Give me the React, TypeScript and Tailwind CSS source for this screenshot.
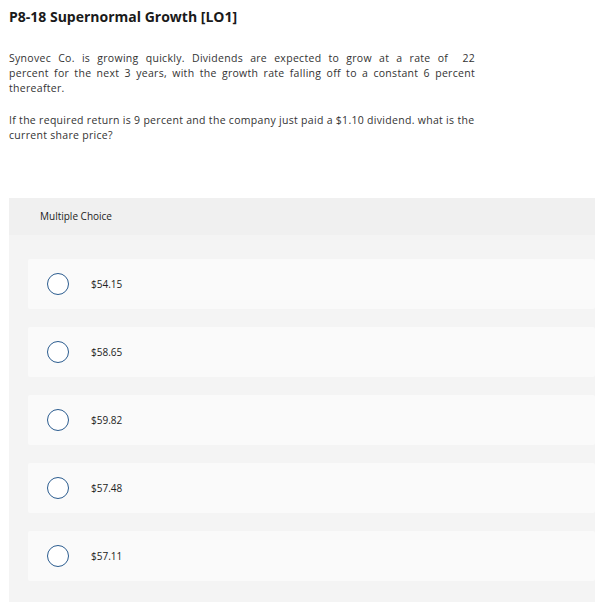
import React from 'react';

const choices = ['$54.15', '$58.65', '$59.82', '$57.48', '$57.11'];

const App: React.FC = () => {
  return (
    <div className="min-h-[602px] bg-white text-[#222] overflow-hidden" style={{ fontFamily: '"Open Sans", "Noto Sans", sans-serif' }}>
      <div className="px-[9px] pt-[8px]">
        <h1 className="text-[14px] font-bold leading-[18px] text-[#1a1a1a]">P8-18 Supernormal Growth [LO1]</h1>

        <div className="mt-[25px] w-[466px] text-[10.5px] leading-[15px] tracking-[0.3px] text-[#333]">
          <p className="text-justify">
            <span className="block [text-align-last:justify]">
              Synovec Co. is growing quickly. Dividends are expected to grow at a rate of&nbsp; 22
            </span>
            percent for the next 3 years, with the growth rate falling off to a constant 6 percent thereafter.
          </p>
          <p className="mt-[17px]">
            If the required return is 9 percent and the company just paid a $1.10 dividend. what is the current share price?
          </p>
        </div>
      </div>

      {/* Question panel */}
      <div className="ml-[9px] mt-[55px] bg-[#f4f4f4] pb-[21px]">
        <div className="h-[37px] bg-[#f0f0f0] flex items-center pl-[31px] text-[10px] text-[#222]">
          Multiple Choice
        </div>
        <div className="pt-[24px] pl-[19px] flex flex-col gap-[18px]">
          {choices.map((c) => (
            <div key={c} className="h-[50px] bg-[#fafafa] rounded-[2px] flex items-center pl-[19px]">
              <span className="w-[22px] h-[22px] rounded-full border-[1.5px] border-[#2b5c8f] bg-white shrink-0" />
              <span className="ml-[22px] text-[10px] text-[#222]">{c}</span>
            </div>
          ))}
        </div>
      </div>
    </div>
  );
};

export default App;
